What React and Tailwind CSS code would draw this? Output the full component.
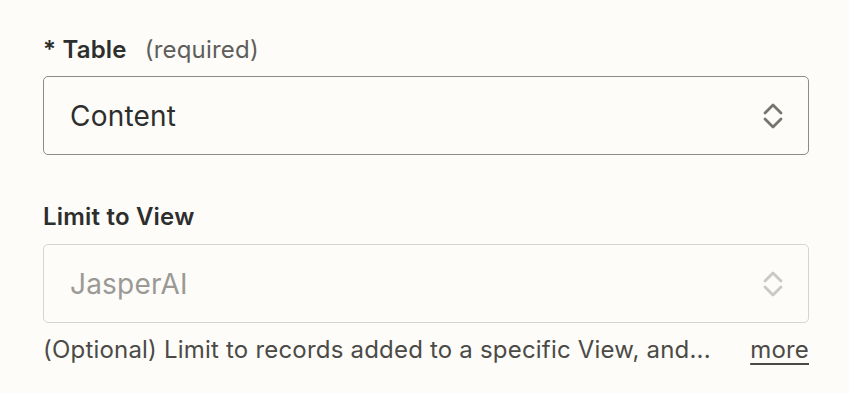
import React from "react";

const Chevrons = ({ color }) => (
  <svg width="22" height="34" viewBox="0 0 22 34" fill="none" stroke={color} strokeWidth="2.8" strokeLinecap="round" strokeLinejoin="round">
    <path d="M3 14 L11 6 L19 14" />
    <path d="M3 20 L11 28 L19 20" />
  </svg>
);

const App = () => {
  return (
    <div className="w-[849px] h-[393px] bg-[#fdfcf8] font-['Inter',sans-serif] pl-[43px] pr-[40px] pt-[34px] tracking-[0.2px]">
      <div className="flex items-baseline gap-[18px] h-[32px] leading-[32px]">
        <span className="text-[24px] font-semibold text-[#2d2e2e]">* Table</span>
        <span className="text-[24px] text-[#5f5e5a]">(required)</span>
      </div>
      <div className="mt-[10px] h-[79px] border border-[#8c8b86] rounded-[5px] flex items-center justify-between pl-[26px] pr-[24px]">
        <span className="text-[28px] text-[#2d2e2e]">Content</span>
        <Chevrons color="#75746f" />
      </div>
      <div className="mt-[46px] h-[32px] leading-[32px] text-[24px] font-semibold text-[#2d2e2e]">Limit to View</div>
      <div className="mt-[11px] h-[79px] border border-[#d6d5d1] rounded-[5px] flex items-center justify-between pl-[26px] pr-[24px]">
        <span className="text-[28px] text-[#9a9995]">JasperAI</span>
        <Chevrons color="#c9c8c4" />
      </div>
      <div className="mt-[11px] flex justify-between items-baseline h-[32px] leading-[32px]">
        <span className="text-[24px] text-[#4b4a47]">(Optional) Limit to records added to a specific View, and...</span>
        <span className="text-[24px] text-[#4b4a47] underline underline-offset-[5px] decoration-[2px]">more</span>
      </div>
    </div>
  );
};

export default App;
